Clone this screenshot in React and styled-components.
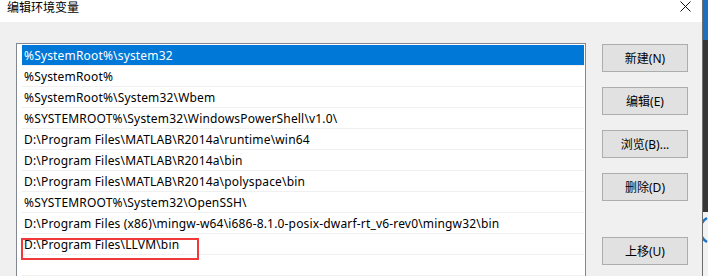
import React from "react";
import styled, { createGlobalStyle } from "styled-components";

const paths = [
  "%SystemRoot%\\system32",
  "%SystemRoot%",
  "%SystemRoot%\\System32\\Wbem",
  "%SYSTEMROOT%\\System32\\WindowsPowerShell\\v1.0\\",
  "D:\\Program Files\\MATLAB\\R2014a\\runtime\\win64",
  "D:\\Program Files\\MATLAB\\R2014a\\bin",
  "D:\\Program Files\\MATLAB\\R2014a\\polyspace\\bin",
  "%SYSTEMROOT%\\System32\\OpenSSH\\",
  "D:\\Program Files (x86)\\mingw-w64\\i686-8.1.0-posix-dwarf-rt_v6-rev0\\mingw32\\bin",
  "D:\\Program Files\\LLVM\\bin",
  "",
];

const buttons = [
  { label: "新建(N)" },
  { label: "编辑(E)" },
  { label: "浏览(B)..." },
  { label: "删除(D)" },
  { label: "上移(U)", apart: true },
];

function App() {
  return (
    <>
      <GlobalStyle />
      <StScreen>
        <StWindow>
          <StTitleBar>
            <StTitle>编辑环境变量</StTitle>
            <StClose aria-label="close">
              <svg width="11" height="11" viewBox="0 0 11 11">
                <path d="M0.5 0.5 L10.5 10.5 M10.5 0.5 L0.5 10.5" stroke="#111" strokeWidth="1" />
              </svg>
            </StClose>
          </StTitleBar>
          <StBody>
            <StListBox>
              {paths.map((p, i) => (
                <StRow key={i} $selected={i === 0}>
                  {p}
                  {i === 9 && <StMark />}
                </StRow>
              ))}
            </StListBox>
            <StButtonColumn>
              {buttons.map((b) => (
                <StButton key={b.label} $apart={b.apart}>
                  {b.label}
                </StButton>
              ))}
            </StButtonColumn>
          </StBody>
        </StWindow>
        <StDesktop>
          <svg width="5" height="276" viewBox="0 0 5 276">
            <rect x="0" y="0" width="5" height="40" fill="#1f6fc0" />
            <rect x="0" y="40" width="5" height="172" fill="#343638" />
            <rect x="0" y="212" width="5" height="64" fill="#f2f2f2" />
            <path d="M4 218 A14 14 0 0 0 4 242" stroke="#1d74c8" strokeWidth="2.5" fill="none" />
          </svg>
        </StDesktop>
      </StScreen>
    </>
  );
}

export default App;

const GlobalStyle = createGlobalStyle`
  body {
    margin: 0;
    background: #f0f0f0;
    font-family: "Noto Sans", "Noto Sans CJK SC", sans-serif;
  }
`;

const StScreen = styled.div`
  display: flex;
  width: 708px;
  height: 276px;
  overflow: hidden;
`;

const StWindow = styled.div`
  display: flex;
  flex-direction: column;
  width: 702px;
  border-right: 1px solid #6e6e6e;
  background-color: #f0f0f0;
`;

const StTitleBar = styled.div`
  display: flex;
  justify-content: space-between;
  align-items: flex-start;
  height: 22px;
  padding: 0 11px 0 7px;
  background-color: #fff;
`;

const StTitle = styled.div`
  font-size: 12px;
  line-height: 15px;
  color: #000;
`;

const StClose = styled.div`
  display: flex;
  padding-top: 1px;
`;

const StBody = styled.div`
  display: flex;
  align-items: flex-start;
  gap: 16px;
  padding: 21px 0 0 16px;
  flex: 1;
  min-height: 0;
`;

const StListBox = styled.div`
  display: flex;
  flex-direction: column;
  width: 570px;
  height: 300px;
  padding: 1px 1px 0 5px;
  box-sizing: border-box;
  border: 1px solid #828790;
  background-color: #fff;
`;

const StRow = styled.div`
  position: relative;
  height: 21px;
  padding-left: 2px;
  box-sizing: border-box;
  border-bottom: 1px solid #f0f0f0;
  font-size: 12px;
  line-height: 21px;
  letter-spacing: 0.17px;
  white-space: nowrap;
  color: ${(props) => (props.$selected ? "#fff" : "#000")};
  background-color: ${(props) => (props.$selected ? "#0078d7" : "transparent")};
`;

const StMark = styled.span`
  position: absolute;
  left: -1px;
  top: 4px;
  width: 178px;
  height: 22px;
  box-sizing: border-box;
  border: 2px solid #f2393a;
`;

const StButtonColumn = styled.div`
  display: flex;
  flex-direction: column;
  gap: 15px;
  padding-top: 1px;
`;

const StButton = styled.button`
  width: 86px;
  height: 28px;
  margin-top: ${(props) => (props.$apart ? "21px" : "0")};
  padding: 0;
  border: 1px solid #adadad;
  background-color: #e1e1e1;
  font-family: "Noto Sans", "Noto Sans CJK SC", sans-serif;
  font-size: 12px;
  color: #000;
`;

const StDesktop = styled.div`
  display: flex;
  flex: 1;
`;
